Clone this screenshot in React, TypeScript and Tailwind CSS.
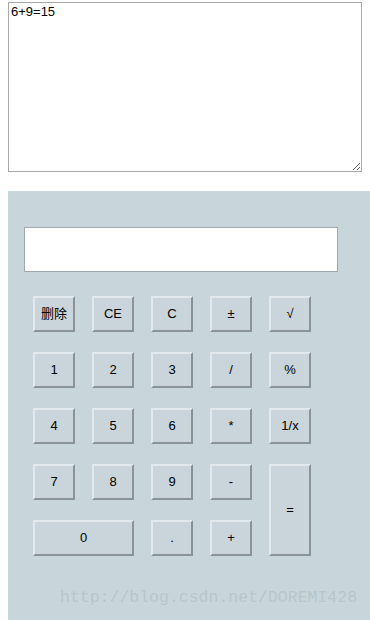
import React from "react";

const btn =
  "flex items-center justify-center bg-[#c9d5da] text-black text-[13px] border-2 border-t-[#e1e9ec] border-l-[#e1e9ec] border-b-[#8a9397] border-r-[#8a9397]";

export default function App() {
  const rows: { label: string; cls?: string }[] = [
    { label: "删除" },
    { label: "CE" },
    { label: "C" },
    { label: "±" },
    { label: "√" },
    { label: "1" },
    { label: "2" },
    { label: "3" },
    { label: "/" },
    { label: "%" },
    { label: "4" },
    { label: "5" },
    { label: "6" },
    { label: "*" },
    { label: "1/x" },
    { label: "7" },
    { label: "8" },
    { label: "9" },
    { label: "-" },
    { label: "=", cls: "row-span-2" },
    { label: "0", cls: "col-span-2" },
    { label: "." },
    { label: "+" },
  ];
  return (
    <div
      className="w-[370px] h-[620px] overflow-hidden bg-white pl-[8px] pt-[2px]"
      style={{ fontFamily: '"Liberation Sans", "Noto Sans CJK SC", sans-serif' }}
    >
      <textarea
        defaultValue="6+9=15"
        className="block w-[354px] h-[170px] border border-[#a9a9a9] px-[2px] py-[1px] text-[13px] leading-[16px] text-black outline-none"
        style={{ fontFamily: '"Liberation Sans", "Noto Sans CJK SC", sans-serif' }}
      />
      <div className="mt-[19px] w-[362px] h-[440px] bg-[#c8d6dc] pt-[36px] pl-[16px] flex flex-col">
        <div className="w-[314px] h-[45px] bg-white border border-[#9fa8ac]" />
        <div className="mt-[24px] ml-[9px] grid grid-cols-[repeat(5,42px)] grid-rows-[repeat(5,36px)] gap-x-[17px] gap-y-[20px]">
          {rows.map((r, i) => (
            <div key={i} className={`${btn} ${r.cls ?? ""}`}>
              {r.label}
            </div>
          ))}
        </div>
        <div
          className="mt-[32px] ml-[36px] text-[16.5px] leading-[20px] text-[#b9c6cb]"
          style={{ fontFamily: '"Liberation Mono", monospace' }}
        >
          http://blog.csdn.net/DOREMI428
        </div>
      </div>
    </div>
  );
}
